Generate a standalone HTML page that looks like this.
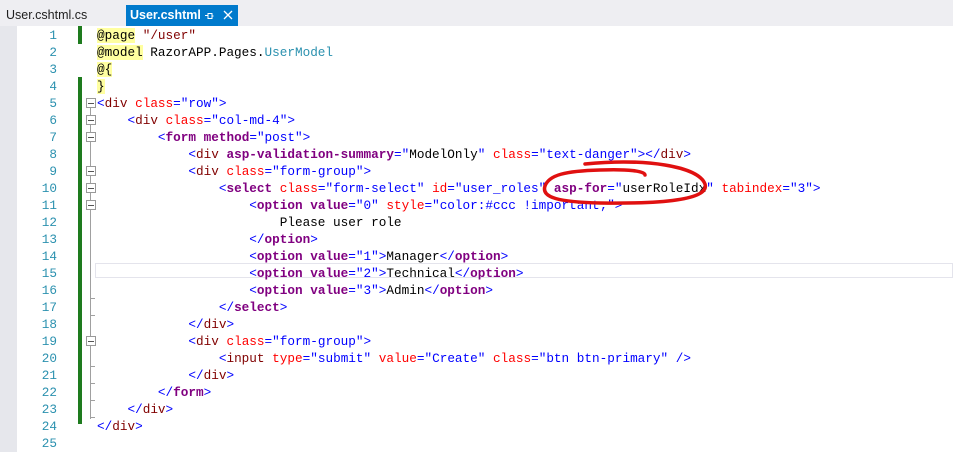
<!DOCTYPE html>
<html><head><meta charset="utf-8"><style>
body{margin:0;width:953px;height:452px;background:#fff;overflow:hidden;position:relative;font-family:"Liberation Sans",sans-serif}
.tabs{position:absolute;left:0;top:0;width:953px;height:26px;background:#eeeef2}
.tab{position:absolute;top:5px;height:21px;font-size:12.5px;line-height:21px;white-space:nowrap;overflow:hidden}
.t1{left:0;width:124px;padding-left:6px;color:#1e1e1e;box-sizing:border-box}
.t2{left:126px;width:112px;background:#007acc;color:#fff;font-weight:bold;padding-left:4px;box-sizing:border-box}
.strip{position:absolute;left:0;top:26px;width:17px;height:426px;background:#e6e7ec}
.num{position:absolute;left:17px;width:40px;text-align:right;color:#2b91af;font:12.7px/17px "Liberation Mono",monospace}
.code{position:absolute;left:97px;white-space:pre;font:12.7px/17px "Liberation Mono",monospace;color:#000}
.g{position:absolute;left:78px;width:4px;background:#1e7b1e}
.b{color:#0000ff}.m{color:#800000}.a{color:#ff0000}.p{color:#800080;font-weight:bold}.k{color:#2b91af}
.y{background:#ffffa0}
.ol{position:absolute;left:90px;width:1px;background:#a0a0a0}
.box{position:absolute;left:86px;width:8px;height:8px;border:1px solid #999;background:#fff}
.box:after{content:"";position:absolute;left:1px;top:3.5px;width:6px;height:1px;background:#555}
.tick{position:absolute;left:90px;width:5px;height:1px;background:#a0a0a0}
</style></head><body>
<div class="tabs">
<div class="tab t1">User.cshtml.cs</div>
<div class="tab t2">User.cshtml</div>
<svg style="position:absolute;left:126px;top:5px" width="112" height="21">
<path d="M79 10.5h3M82 8v6M82 8.5h4v5h-4M86 11h1.5" stroke="#fff" stroke-width="1" fill="none"/>
<path d="M98 6l8 8M106 6l-8 8" stroke="#fff" stroke-width="1.3"/>
</svg>
</div>
<div class="strip"></div>
<div class="g" style="top:26px;height:18px"></div>
<div class="g" style="top:77px;height:347px"></div>
<div class="ol" style="top:106px;height:313px"></div>
<div style="position:absolute;left:95px;top:263px;width:858px;height:15px;border:1px solid #e4e4ec;box-sizing:border-box"></div>

<div class="box" style="top:98px"></div>
<div class="box" style="top:115px"></div>
<div class="box" style="top:132px"></div>
<div class="box" style="top:166px"></div>
<div class="box" style="top:183px"></div>
<div class="box" style="top:200px"></div>
<div class="box" style="top:336px"></div>
<div class="tick" style="top:298px"></div>
<div class="tick" style="top:315px"></div>
<div class="tick" style="top:366px"></div>
<div class="tick" style="top:383px"></div>
<div class="tick" style="top:400px"></div>
<div class="tick" style="top:417px"></div>

<div class="num" style="top:27px">1</div><div class="num" style="top:44px">2</div><div class="num" style="top:61px">3</div><div class="num" style="top:78px">4</div><div class="num" style="top:95px">5</div><div class="num" style="top:112px">6</div><div class="num" style="top:129px">7</div><div class="num" style="top:146px">8</div><div class="num" style="top:163px">9</div><div class="num" style="top:180px">10</div><div class="num" style="top:197px">11</div><div class="num" style="top:214px">12</div><div class="num" style="top:231px">13</div><div class="num" style="top:248px">14</div><div class="num" style="top:265px">15</div><div class="num" style="top:282px">16</div><div class="num" style="top:299px">17</div><div class="num" style="top:316px">18</div><div class="num" style="top:333px">19</div><div class="num" style="top:350px">20</div><div class="num" style="top:367px">21</div><div class="num" style="top:384px">22</div><div class="num" style="top:401px">23</div><div class="num" style="top:418px">24</div><div class="num" style="top:435px">25</div>

<div class="code" style="top:27px"><span class="y">@page</span> <span class="m">"/user"</span>
<span class="y">@model</span> RazorAPP.Pages.<span class="k">UserModel</span>
<span class="y">@{</span>
<span class="y">}</span>
<span class="b">&lt;</span><span class="m">div</span> <span class="a">class</span><span class="b">="row"&gt;</span>
    <span class="b">&lt;</span><span class="m">div</span> <span class="a">class</span><span class="b">="col-md-4"&gt;</span>
        <span class="b">&lt;</span><span class="p">form</span> <span class="p">method</span><span class="b">="post"&gt;</span>
            <span class="b">&lt;</span><span class="m">div</span> <span class="p">asp-validation-summary</span><span class="b">="</span>ModelOnly<span class="b">"</span> <span class="a">class</span><span class="b">="text-danger"&gt;&lt;/</span><span class="m">div</span><span class="b">&gt;</span>
            <span class="b">&lt;</span><span class="m">div</span> <span class="a">class</span><span class="b">="form-group"&gt;</span>
                <span class="b">&lt;</span><span class="p">select</span> <span class="a">class</span><span class="b">="form-select"</span> <span class="a">id</span><span class="b">="user_roles"</span> <span class="p">asp-for</span><span class="b">="</span>userRoleIdx<span class="b">"</span> <span class="a">tabindex</span><span class="b">="3"&gt;</span>
                    <span class="b">&lt;</span><span class="p">option</span> <span class="p">value</span><span class="b">="0"</span> <span class="a">style</span><span class="b">="color:#ccc !important;"&gt;</span>
                        Please user role
                    <span class="b">&lt;/</span><span class="p">option</span><span class="b">&gt;</span>
                    <span class="b">&lt;</span><span class="p">option</span> <span class="p">value</span><span class="b">="1"&gt;</span>Manager<span class="b">&lt;/</span><span class="p">option</span><span class="b">&gt;</span>
                    <span class="b">&lt;</span><span class="p">option</span> <span class="p">value</span><span class="b">="2"&gt;</span>Technical<span class="b">&lt;/</span><span class="p">option</span><span class="b">&gt;</span>
                    <span class="b">&lt;</span><span class="p">option</span> <span class="p">value</span><span class="b">="3"&gt;</span>Admin<span class="b">&lt;/</span><span class="p">option</span><span class="b">&gt;</span>
                <span class="b">&lt;/</span><span class="p">select</span><span class="b">&gt;</span>
            <span class="b">&lt;/</span><span class="m">div</span><span class="b">&gt;</span>
            <span class="b">&lt;</span><span class="m">div</span> <span class="a">class</span><span class="b">="form-group"&gt;</span>
                <span class="b">&lt;</span><span class="m">input</span> <span class="a">type</span><span class="b">="submit"</span> <span class="a">value</span><span class="b">="Create"</span> <span class="a">class</span><span class="b">="btn btn-primary" /&gt;</span>
            <span class="b">&lt;/</span><span class="m">div</span><span class="b">&gt;</span>
        <span class="b">&lt;/</span><span class="p">form</span><span class="b">&gt;</span>
    <span class="b">&lt;/</span><span class="m">div</span><span class="b">&gt;</span>
<span class="b">&lt;/</span><span class="m">div</span><span class="b">&gt;</span>
</div>

<svg style="position:absolute;left:0;top:0" width="953" height="452">
<path d="M585 164 C645 158 698 166 705 184 C710 200 660 204 600 203 C560 202 541 198 545 186 C549 175 565 171 600 170 C628 169 645 171 645 175" fill="none" stroke="#e01010" stroke-width="3.5" stroke-linecap="round"/>
</svg>
</body></html>
